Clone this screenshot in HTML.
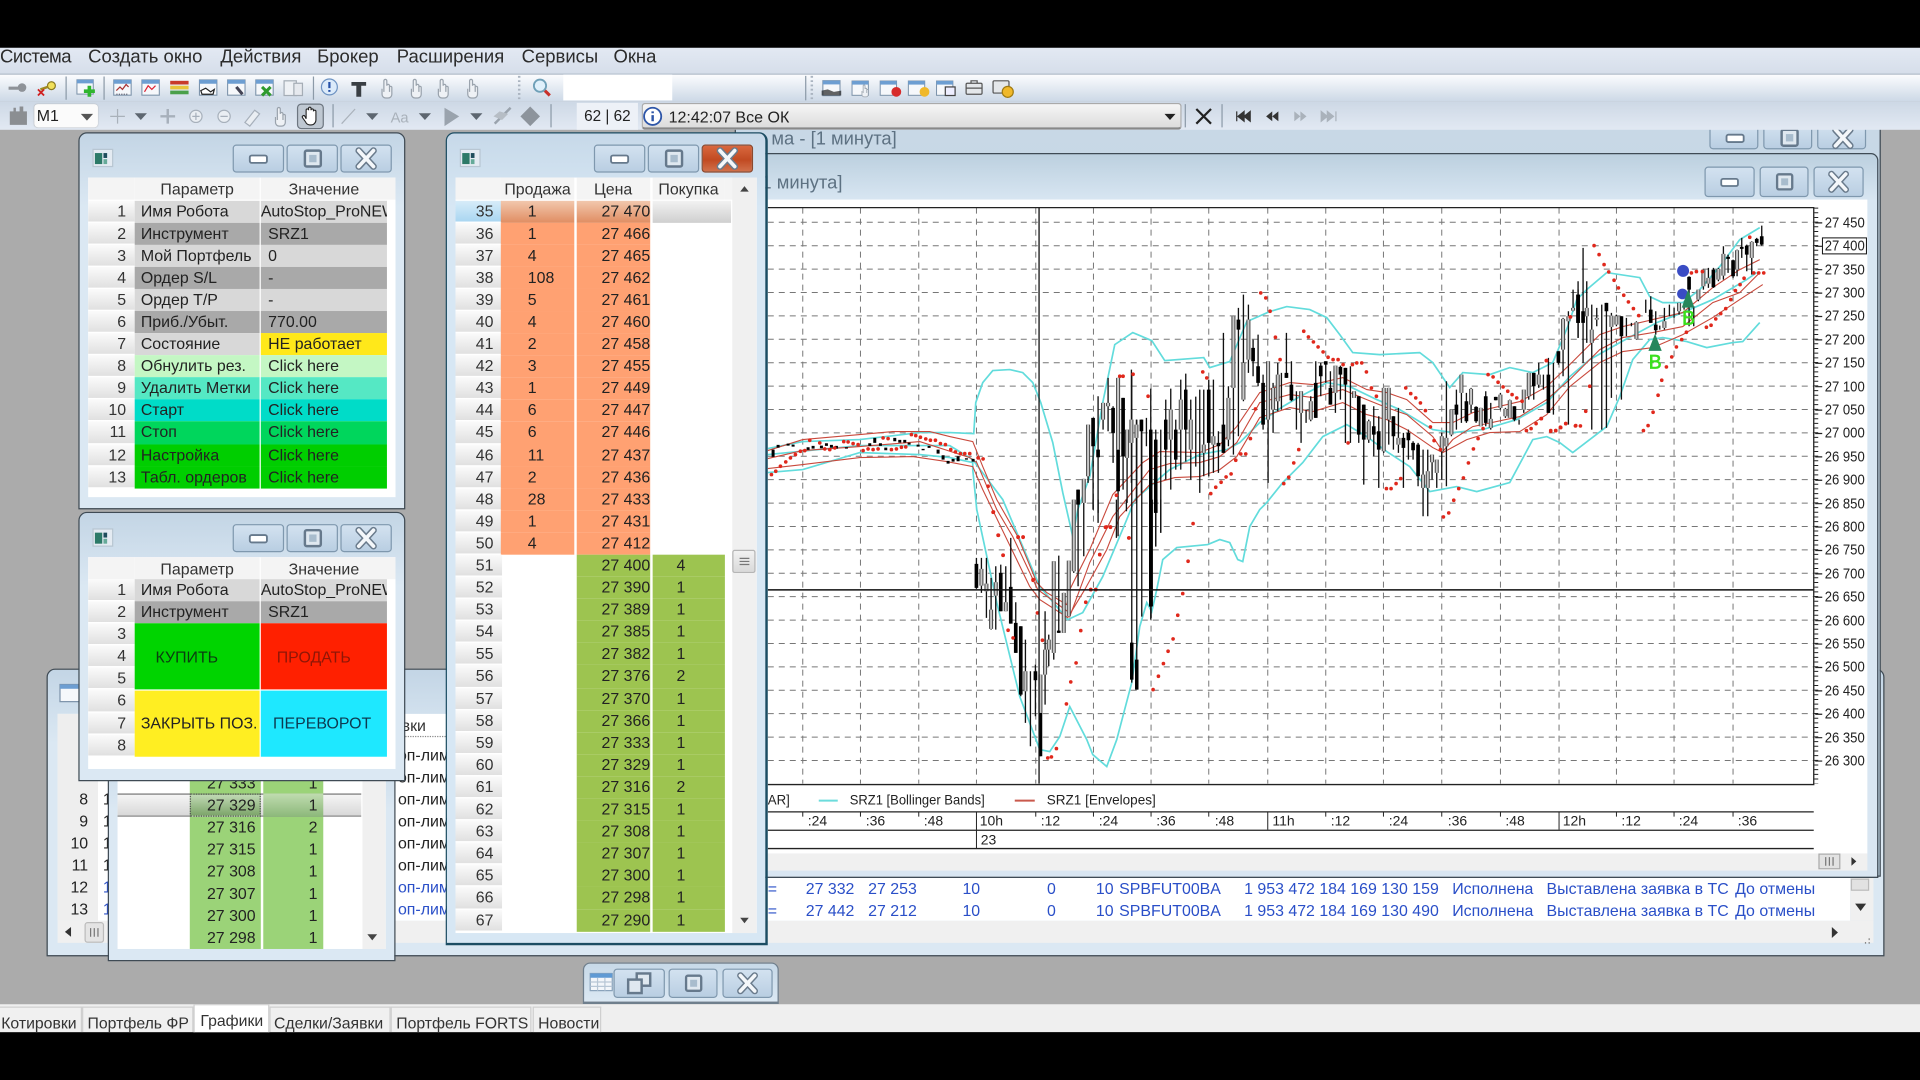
<!DOCTYPE html>
<html lang="ru"><head><meta charset="utf-8"><title>Терминал</title>
<style>
html,body{margin:0;padding:0;background:#000;width:1920px;height:1080px;overflow:hidden}
#p{position:absolute;left:0;top:0;width:1568px;height:882px;transform:scale(1.22449);transform-origin:0 0;overflow:hidden;background:#000;font:13px/18px "Liberation Sans","Noto Sans CJK SC",sans-serif;color:#222}
#p div,#p span{box-sizing:border-box}
.a{position:absolute}
.t{position:absolute;white-space:nowrap;line-height:18px}
.win{position:absolute;border:1px solid #3f4b55;border-radius:7px 7px 0 0;background:linear-gradient(#c3d5e5,#dbe8f3 60px,#dbe8f3)}
.b{position:absolute;width:42px;height:23px;border:1px solid #7f98ae;border-radius:3px;background:linear-gradient(#d3e2f0,#b9cee2)}
.b svg{position:absolute;left:0;top:0;width:40px;height:21px}
.bx{border:1px solid #8a4a30;background:linear-gradient(#d9683f,#c14a22 55%,#d1714c)}
.tb{position:absolute;background:#fff;overflow:hidden}
.r{position:relative;height:18.1px}
.r>*{position:absolute;top:0;height:18.1px;line-height:18.7px;overflow:hidden;white-space:nowrap}
.n{left:0;width:38px;text-align:right;padding-right:7px;background:linear-gradient(#fbfbfb,#e0e0e0);color:#333;border-bottom:1px solid #fff}
.c1{left:38px;width:102px;padding-left:5px}
.c2{left:141px;width:103px;padding-left:6px}
.hd{position:absolute;top:0;height:18px;text-align:center;line-height:19px;color:#333;background:#f4f4f4}
.L{background:#d8d8d8}.D{background:#a9a9a9}
.s{left:37px;width:60px;padding-left:22px}
.pr{left:98.5px;width:60.5px;text-align:right}
.v{left:160.5px;width:59.5px;padding-left:20px}
.o{background:#ffa172}.g{background:#9dc450}
.tab{position:absolute;top:821.5px;height:21px;background:#f0f0f0;border:1px solid #cfcfcf;border-bottom:0;line-height:25px;padding-left:4px;color:#333;font-size:12.9px;white-space:nowrap;overflow:hidden}
.u{position:absolute;top:0;color:#2a4fc8;white-space:nowrap}
.m{position:absolute;top:37.5px;font-size:15.1px;line-height:18px;color:#2b2b2b;white-space:nowrap}
.cy{fill:none;stroke:#62dcdc;stroke-width:1.7}
.rd{fill:none;stroke:#c9493c;stroke-width:1.1}
.wk{fill:none;stroke:#111;stroke-width:4}
.bk{fill:none;stroke:#000;stroke-width:11}
.hb{fill:none;stroke:#444;stroke-width:12}
.hi{fill:none;stroke:#c9c9c9;stroke-width:6}
.dt{fill:none;stroke:#e0281c;stroke-width:11;stroke-linecap:round}
</style></head><body><div id="p">

<svg width="0" height="0" style="position:absolute"><defs>
<symbol id="mn" viewBox="0 0 40 21"><rect x="13" y="8" width="14" height="6" rx="1.5" fill="#fff" stroke="#66798c" stroke-width="1.5"/></symbol>
<symbol id="mx" viewBox="0 0 40 21"><rect x="14" y="4" width="13" height="13" rx="1.5" fill="#dfe8f0" stroke="#66798c" stroke-width="2"/><rect x="17.5" y="7.5" width="6" height="6" fill="#a8bccd"/></symbol>
<symbol id="cl" viewBox="0 0 40 21"><path d="M14 4L26 17M26 4L14 17" stroke="#6a7b8c" stroke-width="5.5" stroke-linecap="round"/><path d="M14 4L26 17M26 4L14 17" stroke="#f4f7fa" stroke-width="3" stroke-linecap="round"/></symbol>
<symbol id="wi" viewBox="0 0 18 16"><rect x="1" y="1" width="16" height="14" fill="#e4ebf2" stroke="#b8c6d2"/><rect x="2.5" y="4" width="6" height="9" fill="#2c7a68"/><rect x="9.5" y="4" width="3" height="4" fill="#1f4d5c"/><rect x="9.5" y="9" width="3" height="4" fill="#6a9"/></symbol>
<symbol id="d" viewBox="0 0 18 16"><rect x="1" y="1" width="16" height="14" fill="#f6f8fb" stroke="#7d93aa"/><rect x="1" y="1" width="16" height="3.5" fill="#6d9ed2"/></symbol>
</defs></svg>

<!-- MDI background -->
<div class="a" style="left:0;top:59px;width:1568px;height:761px;background:#ababab"></div>

<!-- Orders window (behind) -->
<div class="win" style="left:38px;top:546px;width:1501px;height:235px"></div>
<svg class="a" style="left:48px;top:558px;width:18px;height:16px"><use href="#d"/></svg>
<circle></circle>
<div class="a" style="left:47px;top:583px;width:1464px;height:169px;background:#fff"></div>
<div class="a" style="left:47px;top:583px;width:33px;height:169px;background:#eee"></div>
<div class="a" style="left:47px;top:752px;width:1483px;height:18px;background:#f0f0f0"></div>
<div class="a" style="left:1511px;top:716px;width:19px;height:36px;background:#f0f0f0"></div>
<div class="t" style="left:328px;top:584px;color:#333">вки</div>
<div class="a" style="left:327px;top:601px;width:37px;border-top:1px dotted #888"></div>
<div class="t" style="left:325px;top:608px">оп-лим</div>
<div class="t" style="left:325px;top:626px">оп-лим</div>
<div class="t" style="left:325px;top:644px">оп-лим</div>
<div class="t" style="left:325px;top:662px">оп-лим</div>
<div class="t" style="left:325px;top:680px">оп-лим</div>
<div class="t" style="left:325px;top:698px">оп-лим</div>
<div class="t" style="left:325px;top:716px;color:#2a4fc8">оп-лим</div>
<div class="t" style="left:325px;top:734px;color:#2a4fc8">оп-лим</div>
<div class="t" style="left:47px;top:644px;width:25px;text-align:right">8</div><div class="t" style="left:84px;top:644px">1</div>
<div class="t" style="left:47px;top:662px;width:25px;text-align:right">9</div><div class="t" style="left:84px;top:662px">1</div>
<div class="t" style="left:47px;top:680px;width:25px;text-align:right">10</div><div class="t" style="left:84px;top:680px">1</div>
<div class="t" style="left:47px;top:698px;width:25px;text-align:right">11</div><div class="t" style="left:84px;top:698px">1</div>
<div class="t" style="left:47px;top:716px;width:25px;text-align:right">12</div><div class="t" style="left:84px;top:716px;color:#2a4fc8">1</div>
<div class="t" style="left:47px;top:734px;width:25px;text-align:right">13</div><div class="t" style="left:84px;top:734px;color:#2a4fc8">1</div>
<svg class="a" style="left:50px;top:753px;width:38px;height:17px"><path d="M8 4v8L3 8z" fill="#333"/><rect x="19.5" y="0.5" width="15" height="16" rx="2" fill="#e4e4e4" stroke="#bbb"/><path d="M24 5v7M27 5v7M30 5v7" stroke="#777"/></svg>

<!-- order rows -->
<div class="a" style="left:627px;top:716px;width:884px;height:36px;overflow:hidden">
 <div class="a" style="left:0;top:1px;width:884px;height:18px">
 <span class="u" style="left:0;top:0">=</span><span class="u" style="left:31px">27 332</span><span class="u" style="left:82px">27 253</span><span class="u" style="left:159px">10</span><span class="u" style="left:228px">0</span><span class="u" style="left:268px">10</span><span class="u" style="left:287px">SPBFUT00BA</span><span class="u" style="left:389px">1 953 472 184 169 130 159</span><span class="u" style="left:559px">Исполнена</span><span class="u" style="left:636px">Выставлена заявка в ТС</span><span class="u" style="left:790px">До отмены</span>
 </div>
 <div class="a" style="left:0;top:19px;width:884px;height:18px">
 <span class="u" style="left:0;top:0">=</span><span class="u" style="left:31px">27 442</span><span class="u" style="left:82px">27 212</span><span class="u" style="left:159px">10</span><span class="u" style="left:228px">0</span><span class="u" style="left:268px">10</span><span class="u" style="left:287px">SPBFUT00BA</span><span class="u" style="left:389px">1 953 472 184 169 130 490</span><span class="u" style="left:559px">Исполнена</span><span class="u" style="left:636px">Выставлена заявка в ТС</span><span class="u" style="left:790px">До отмены</span>
 </div>
</div>
<svg class="a" style="left:1490px;top:716px;width:48px;height:60px"><rect x="22" y="2" width="14" height="9" fill="#e2e2e2" stroke="#bbb"/><path d="M25 22h9l-4.500 6z" fill="#333"/><path d="M6 41v9l5-4.500z" fill="#333"/><path d="M36 54h1M33 54h1M36 51h1" stroke="#888" stroke-width="1.500"/></svg>

<!-- Back chart window -->
<div class="a" style="left:600px;top:96px;width:936px;height:620px;background:linear-gradient(#c8d8e6,#b7ccdc);border:1px solid #3f4b55;border-radius:6px 6px 0 0"></div>
<div class="t" style="left:630px;top:105px;font-size:15px;color:#5d7182">ма - [1 минута]</div>
<div class="b" style="left:1396px;top:101px;width:40px;height:21px"><svg><use href="#mn"/></svg></div>
<div class="b" style="left:1440px;top:101px;width:40px;height:21px"><svg><use href="#mx"/></svg></div>
<div class="b" style="left:1484px;top:101px;width:40px;height:21px"><svg><use href="#cl"/></svg></div>

<!-- Front chart window -->
<div class="a" style="left:600px;top:125px;width:934px;height:592px;background:linear-gradient(#bcd0df,#d8e6f2 38px,#d9e6f2);border:1px solid #3f4b55;border-radius:6px 6px 0 0"></div>
<div class="t" style="left:600px;top:141px;width:88px;text-align:right;font-size:15px;color:#5d7182">[1 минута]</div>
<div class="b" style="left:1392px;top:136px;width:41px;height:25px"><svg style="width:39px;height:23px"><use href="#mn"/></svg></div>
<div class="b" style="left:1437px;top:136px;width:40px;height:25px"><svg style="width:38px;height:23px"><use href="#mx"/></svg></div>
<div class="b" style="left:1481px;top:136px;width:41px;height:25px"><svg style="width:39px;height:23px"><use href="#cl"/></svg></div>
<div class="a" style="left:627px;top:163px;width:898px;height:534px;background:#fff"></div>
<div class="a" style="left:627px;top:697px;width:898px;height:13.500px;background:#f0f0f0"></div>
<svg class="a" style="left:1484px;top:697px;width:40px;height:13px"><rect x="1.500" y="0.500" width="17" height="12" fill="#e2e2e2" stroke="#aaa"/><path d="M7 3v7M10 3v7M13 3v7" stroke="#777"/><path d="M28 3v7l4-3.500z" fill="#333"/></svg>

<!-- Chart -->
<svg class="a" style="left:627.2px;top:163.33px;width:904.05px;height:547.17px" viewBox="768 200 1107 670" font-family="Liberation Sans, sans-serif">
<defs>
<path id="h8" d="M65 208V258M80 252V275M94 330V388M108 248V288M138 308V335M197 515V575M242 525V640M256 450V525M267 420V450M282 185V460M312 280V400M327 183V350M342 0V215"/>
<path id="h9" d="M12 495V520M41 470V495M86 355V480M101 110V325M131 250V360M146 120V240M205 245V420M220 325V390M234 285V365M304 335V400M333 365V420M407 258V340M463 335V355M507 425V480M552 325V515M567 325V420M596 475V495M670 585V625M684 575V625M697 525V548M711 540V580M726 470V515M740 475V500M755 390V465M785 285V340M814 328V375M843 385V440M873 418V445M902 345V385M917 388V410M930 362V415M972 330V390M987 280V350M1017 285V315M1090 118V210M1106 110V125M1120 85V93"/>
<path id="h0" d="M141 295V320M156 360V400M171 325V330M215 318V352M230 320V345M290 338V388M374 335V355M418 280V305M476 240V270M491 180V230M506 205V222M536 178V210M551 133V198M592 122V180M636 97V145"/>
<path id="hz" d="M942 328V400M955 165V320M1000 100V150M1015 100V110M1045 25V240M1072 180V265M1085 150V220M1100 165V205"/>
<path id="hr" d="M1171 410V440M1181 400V430M1191 420V450"/>
</defs>
<!-- grid -->
<path d="M768 222.700H1814M768 246.100H1814M768 269.500H1814M768 292.900H1814M768 316.300H1814M768 339.700H1814M768 363.100H1814M768 386.500H1814M768 409.900H1814M768 433.300H1814M768 456.700H1814M768 480.100H1814M768 503.500H1814M768 526.900H1814M768 550.300H1814M768 573.700H1814M768 597.100H1814M768 620.500H1814M768 643.900H1814M768 667.300H1814M768 690.700H1814M768 714.100H1814M768 737.500H1814M768 760.900H1814" fill="none" stroke="#777" stroke-width="1" stroke-dasharray="6 5"/>
<path d="M803 208V784M860.700 208V784M919 208V784M976.700 208V784M1036 208V784M1093.700 208V784M1151.300 208V784M1209 208V784M1268 208V784M1326 208V784M1383.700 208V784M1442 208V784M1500.700 208V784M1559.300 208V784M1616.700 208V784M1674.300 208V784M1733.300 208V784" fill="none" stroke="#777" stroke-width="1" stroke-dasharray="6 5"/>
<!-- bollinger -->
<polyline class="cy" points="768,449 803,442 860,440 920,433 950,433 974,434 976,403 983,383 993,371 1010,370 1023,373 1033,383 1041,403 1053,443 1063,493 1073,537 1078,510 1090,477 1103,403 1115,345 1133,333 1152,341 1165,361 1204,358 1210,368 1230,362 1247,322 1270,312 1287,307 1310,310 1327,318 1340,335 1353,353 1380,355 1420,353 1433,363 1450,388 1463,373 1490,375 1510,368 1533,373 1553,363 1568,327 1577,300 1587,290 1607,273 1640,278 1650,297 1663,303 1683,303 1700,290 1720,267 1740,240 1760,228"/>
<polyline class="cy" points="768,473 803,470 860,453 920,455 950,458 973,463 973,470 977,510 997,603 1020,697 1040,750 1050,752 1060,737 1070,707 1087,740 1093,755 1107,767 1117,740 1132,683 1140,627 1147,603 1152,612 1157,590 1163,560 1177,548 1208,545 1220,540 1230,543 1238,560 1243,562 1250,527 1260,510 1267,503 1283,483 1303,463 1323,437 1347,425 1367,437 1387,452 1410,467 1430,492 1457,487 1477,492 1510,483 1533,440 1547,437 1560,443 1573,453 1607,427 1620,397 1633,360 1650,340 1663,338 1687,342 1707,348 1733,343 1743,342 1760,323"/>
<polyline class="cy" points="768,455 860,446 950,446 973,460 1003,500 1040,587 1068,620 1083,613 1103,577 1127,520 1135,500 1170,470 1200,455 1227,450 1240,443 1260,423 1283,407 1300,397 1327,383 1350,387 1377,400 1400,410 1433,430 1453,433 1483,430 1517,420 1547,403 1570,377 1590,360 1620,343 1657,323 1683,313 1713,300 1747,280 1757,273"/>
<!-- envelopes -->
<polyline class="rd" points="768,451 803,440 860,435 893,432 930,432 950,437 973,442 983,467 997,500 1018,537 1037,583 1047,593 1067,605 1070,590 1090,550 1113,495 1143,463 1160,452 1200,453 1220,445 1237,427 1260,393 1290,383 1313,385 1343,378 1367,390 1387,393 1407,400 1433,423 1453,423 1473,413 1520,402 1547,387 1570,365 1600,335 1623,327 1653,320 1683,313 1713,288 1740,270 1760,260"/>
<polyline class="rd" points="768,459 803,451 860,447 920,442 970,458 977,463 997,510 1013,537 1038,590 1068,612 1070,617 1090,563 1113,517 1150,470 1170,464 1200,463 1220,457 1237,443 1260,403 1290,395 1313,398 1343,390 1367,400 1387,408 1407,415 1433,437 1443,452 1453,440 1473,427 1520,417 1547,400 1570,380 1600,350 1623,338 1653,333 1683,327 1713,303 1740,293 1760,273"/>
<polyline class="rd" points="768,469 803,465 860,458 913,457 947,462 973,467 983,490 1030,587 1040,600 1068,618 1085,590 1107,550 1120,517 1150,485 1175,478 1200,477 1220,470 1237,457 1260,418 1290,408 1313,412 1343,403 1367,415 1387,420 1407,430 1433,448 1443,453 1467,440 1490,433 1520,432 1547,415 1570,387 1600,363 1623,352 1653,348 1683,335 1713,318 1740,300 1763,285"/>
<!-- candles real -->
<path d="M1132 374V683M1137 420V690M1142 420V617M1151 389V620M1156 430V547M1161 430V533M1166 400V480M1171 389V490M1176 420V470M1181 380V470M1186 374V462M1191 400V480M1196 397V467" fill="none" stroke="#111" stroke-width="1.330"/>
<path d="M1132 643V680M1137 660V690M1151 430V607M1156 440V513M1166 420V450M1176 430V460M1186 390V430" fill="none" stroke="#000" stroke-width="3.500"/>
<use href="#hr" fill="none" stroke="#444" stroke-width="4"/><use href="#hr" fill="none" stroke="#ccc" stroke-width="2"/>
<!-- zoom 7 group -->
<g transform="translate(770 370) scale(.33333)">
<path class="wk" d="M925 360V650M942 328V560M955 165V340M970 145V420M985 80V430M1000 100V180M1015 25V185M1030 110V280M1045 25V500M1060 85V360M1072 180V400M1085 0V340M1100 150V400M1115 150V370M1130 145V230"/>
<path class="bk" style="stroke-width:9" d="M10 240V262M25 226V234M55 222V228M70 225V231M115 233V241M130 229V237M155 228V236M170 221V229M185 226V234M200 229V237M230 233V237M265 223V229M300 221V229M315 205V220M332 221V229M348 234V242M375 205V215M390 211V219M405 211V219M418 219V225M445 225V231M460 238V242M478 229V235M505 240V252M520 257V270M535 274V282M550 268V276M565 260V275M590 266V270M610 268V276"/>
<path class="bk" d="M925 360V405M970 145V230M985 240V263M1030 115V190M1045 240V365M1060 85V260M1115 150V185"/>
<use href="#hz" class="hb"/><use href="#hz" class="hi"/>
<path class="dt" d="M5 315h0M18 305h0M32 290h0M48 277h0M62 265h0M77 255h0M92 245h0M105 243h0M120 212h0M150 220h0M165 238h0M180 240h0M195 235h0M222 216h0M235 217h0M250 222h0M265 225h0M280 243h0M295 238h0M310 240h0M325 238h0M340 205h0M355 207h0M365 240h0M380 238h0M395 233h0M408 232h0M425 195h0M438 198h0M452 203h0M468 208h0M482 212h0M497 212h0M512 222h0M527 225h0M543 240h0M557 247h0M572 252h0M585 252h0M600 252h0M625 265h0M640 268h0M655 350h0M670 428h0M685 497h0M700 557h0M745 503h0M760 503h0M790 632h0M1010 472h0M1022 472h0M990 555h0M1040 377h0M1077 505h0M1060 20h0M1050 20h0M1090 14h0M1135 80h0M963 660h0M978 660h0"/>
</g>
<!-- zoom 8 group -->
<g transform="translate(960 500) scale(.33333)">
<path class="wk" d="M50 175V268M65 175V280M80 175V355M94 235V390M108 200V390M123 195V335M138 200V335M153 115V372M168 308V460M183 380V590M197 420V670M212 515V740M227 495V650M242 525V770M256 335V615M267 405V500M282 185V480M297 168V400M312 280V400M327 183V350M342 0V220M400 0V30M415 0V70M470 0V115M500 0V35M574 0V355M588 0V140M603 0V100"/>
<path class="bk" d="M50 193V265M123 220V335M153 262V372M168 370V460M183 380V585M227 515V542M242 640V770M297 393V400M574 0V320M588 0V40"/>
<use href="#h8" class="hb"/><use href="#h8" class="hi"/>
<path class="dt" d="M101 37h0M116 107h0M130 167h0M145 392h0M160 415h0M175 112h0M190 112h0M220 240h0M233 340h0M248 422h0M264 775h0M275 772h0M290 747h0M320 613h0M333 547h0M349 490h0M363 393h0M378 308h0M393 270h0M408 270h0M420 165h0M437 83h0M452 83h0M508 115h0M580 570h0M596 530h0M611 492h0M625 455h0M640 418h0M654 347h0M669 282h0M685 185h0M700 72h0"/>
</g>
<!-- zoom 9 group -->
<g transform="translate(1200 280) scale(.33333)">
<path class="wk" d="M0 330V640M12 330V590M27 300V590M41 300V580M56 455V580M71 160V520M86 320V500M101 110V525M116 85V470M131 45V365M146 75V280M160 180V290M175 165V320M190 285V450M205 245V610M220 310V460M234 250V395M245 280V390M260 160V295M275 245V365M290 335V450M304 335V490M319 390V430M333 350V425M348 245V415M363 250V350M378 245V310M392 275V375M407 258V400M422 258V360M437 265V490M452 260V490M463 335V355M477 350V490M492 375V615M507 420V490M522 380V530M537 410V625M552 325V520M567 325V495M581 410V510M596 385V520M611 460V625M626 450V540M640 485V540M655 490V620M670 510V710M684 510V710M697 525V600M711 540V625M726 460V600M740 305V620M755 390V470M770 330V450M785 285V430M800 340V430M814 325V400M829 380V430M843 385V440M858 335V440M873 370V450M888 352V362M902 340V390M917 385V415M930 360V415M944 380V425M958 420V435M972 330V400M987 280V360M1002 280V360M1017 250V325M1031 285V330M1046 235V400M1061 250V405M1076 215V255M1090 115V290M1106 95V435M1120 30V95M1135 30V175"/>
<path class="bk" d="M27 330V490M56 490V500M71 435V520M116 120V150M160 205V245M175 260V310M190 310V435M260 280V295M275 315V362M348 310V415M363 258V290M378 245V255M392 325V375M422 262V285M437 265V315M477 350V465M492 375V480M522 440V465M537 455V510M581 410V470M611 475V505M626 460V482M640 490V512M655 495V590M770 375V405M800 365V425M829 382V425M858 350V430M888 352V362M944 380V420M1002 280V320M1046 285V400M1076 215V250M1135 45V130"/>
<use href="#h9" class="hb"/><use href="#h9" class="hi"/>
<path class="dt" d="M33 642h0M48 623h0M64 608h0M79 592h0M94 583h0M108 542h0M123 523h0M138 523h0M152 477h0M167 388h0M9 277h0M21 295h0M183 40h0M198 55h0M211 95h0M227 173h0M241 240h0M252 612h0M267 593h0M282 550h0M297 510h0M312 155h0M326 172h0M341 187h0M355 202h0M370 217h0M385 233h0M400 240h0M415 240h0M430 255h0M445 490h0M458 255h0M471 250h0M486 250h0M500 277h0M515 325h0M530 350h0M560 627h0M574 627h0M589 612h0M603 597h0M618 325h0M633 342h0M648 355h0M662 370h0M677 393h0M692 442h0M703 483h0M722 510h0M731 712h0M747 700h0M762 662h0M777 627h0M791 595h0M806 550h0M821 508h0M835 477h0M850 447h0M865 285h0M880 292h0M895 308h0M910 322h0M924 335h0M937 345h0M951 355h0M967 365h0M980 453h0M994 447h0M1009 432h0M1024 417h0M1040 243h0M1053 455h0M1068 453h0M1083 444h0M1098 432h0M1112 112h0M1128 438h0"/>
</g>
<!-- zoom 10 group -->
<g transform="translate(1540 210) scale(.33333)">
<circle cx="430" cy="184" r="18" fill="#3a4cc4"/><circle cx="428" cy="253" r="16" fill="#3a4cc4"/>
<path class="wk" d="M115 215V385M130 115V460M141 215V400M156 285V660M171 295V350M186 285V660M200 280V655M215 310V565M230 315V350M245 320V570M260 325V380M275 340V350M290 335V390M318 270V310M333 260V340M348 305V375M360 348V360M374 295V360M389 285V320M403 295V325M418 280V315M433 280V300M448 200V350M462 290V350M476 240V275M491 178V240M506 175V235M521 175V235M536 175V215M551 110V210M565 135V190M580 150V205M592 120V200M606 85V145M621 105V185M636 95V195M651 85V110M666 48V108"/>
<path class="bk" d="M115 255V340M130 305V340M200 280V305M245 320V380M333 300V340M348 345V362M448 202V240M521 180V233M565 142V148M580 152V200M606 112V118M621 108V135M651 88V100M666 80V105"/>
<use href="#h0" class="hb"/><use href="#h0" class="hi"/>
<path class="dt" d="M163 108h0M178 135h0M193 165h0M207 187h0M223 212h0M236 235h0M252 257h0M266 277h0M281 297h0M297 318h0M311 663h0M325 648h0M340 608h0M355 557h0M366 512h0M380 472h0M396 442h0M410 412h0M426 390h0M440 368h0M455 190h0M470 186h0M488 186h0M500 353h0M514 347h0M528 328h0M543 312h0M558 297h0M573 270h0M587 243h0M601 225h0M613 206h0M630 83h0M642 190h0M657 190h0M672 190h0M5 627h0M20 453h0M33 663h0M48 663h0M62 653h0M78 642h0M92 322h0M107 649h0M122 649h0M138 605h0M150 530h0"/>
<path d="M346 372L326 424H366Z" fill="#27875c"/><path d="M445 240L426 294H464Z" fill="#27875c"/>
<text x="327" y="477" font-size="58" fill="#3ae01e" stroke="#3ae01e" stroke-width="2" font-family="Liberation Sans, sans-serif">B</text>
<text x="427" y="345" font-size="58" fill="#3ae01e" stroke="#3ae01e" stroke-width="2" font-family="Liberation Sans, sans-serif">B</text>
</g>
<!-- crosshair + frame -->
<path d="M1039.300 208V784" stroke="#111" stroke-width="1.300"/>
<path d="M768 590.300H1814" stroke="#111" stroke-width="1.600"/>
<path d="M768 208H1814V785H768" fill="none" stroke="#222" stroke-width="1.300"/>
<!-- axis ticks -->
<path d="M1816.500 208V784" stroke="#222" stroke-width="4" stroke-dasharray="1 3.680"/>
<path d="M1819 222.700V784" stroke="#222" stroke-width="7" stroke-dasharray="1.200 22.200"/>
<rect x="1822.700" y="238.300" width="44" height="16" fill="#fff" stroke="#111"/>
<g font-size="15" fill="#222">
<text x="1825" y="228" textLength="40" lengthAdjust="spacingAndGlyphs">27 450</text><text x="1825" y="251" textLength="40" lengthAdjust="spacingAndGlyphs">27 400</text><text x="1825" y="275" textLength="40" lengthAdjust="spacingAndGlyphs">27 350</text><text x="1825" y="298" textLength="40" lengthAdjust="spacingAndGlyphs">27 300</text><text x="1825" y="321" textLength="40" lengthAdjust="spacingAndGlyphs">27 250</text><text x="1825" y="345" textLength="40" lengthAdjust="spacingAndGlyphs">27 200</text><text x="1825" y="368" textLength="40" lengthAdjust="spacingAndGlyphs">27 150</text><text x="1825" y="392" textLength="40" lengthAdjust="spacingAndGlyphs">27 100</text><text x="1825" y="415" textLength="40" lengthAdjust="spacingAndGlyphs">27 050</text><text x="1825" y="438" textLength="40" lengthAdjust="spacingAndGlyphs">27 000</text><text x="1825" y="462" textLength="40" lengthAdjust="spacingAndGlyphs">26 950</text><text x="1825" y="485" textLength="40" lengthAdjust="spacingAndGlyphs">26 900</text><text x="1825" y="509" textLength="40" lengthAdjust="spacingAndGlyphs">26 850</text><text x="1825" y="532" textLength="40" lengthAdjust="spacingAndGlyphs">26 800</text><text x="1825" y="555" textLength="40" lengthAdjust="spacingAndGlyphs">26 750</text><text x="1825" y="579" textLength="40" lengthAdjust="spacingAndGlyphs">26 700</text><text x="1825" y="602" textLength="40" lengthAdjust="spacingAndGlyphs">26 650</text><text x="1825" y="626" textLength="40" lengthAdjust="spacingAndGlyphs">26 600</text><text x="1825" y="649" textLength="40" lengthAdjust="spacingAndGlyphs">26 550</text><text x="1825" y="672" textLength="40" lengthAdjust="spacingAndGlyphs">26 500</text><text x="1825" y="696" textLength="40" lengthAdjust="spacingAndGlyphs">26 450</text><text x="1825" y="719" textLength="40" lengthAdjust="spacingAndGlyphs">26 400</text><text x="1825" y="743" textLength="40" lengthAdjust="spacingAndGlyphs">26 350</text><text x="1825" y="766" textLength="40" lengthAdjust="spacingAndGlyphs">26 300</text>
</g>
<!-- legend -->
<g font-size="14" fill="#222">
<text x="768" y="805" textLength="22" lengthAdjust="spacingAndGlyphs">AR]</text>
<text x="850" y="805" textLength="135" lengthAdjust="spacingAndGlyphs">SRZ1 [Bollinger Bands]</text>
<text x="1047" y="805" textLength="109" lengthAdjust="spacingAndGlyphs">SRZ1 [Envelopes]</text>
</g>
<path d="M819 801H838" stroke="#6cdcdc" stroke-width="2"/><path d="M1015 801H1035" stroke="#c9594c" stroke-width="2"/>
<!-- time axis -->
<path d="M768 812.300H1814M768 830.700H1814M768 849H1814" stroke="#222" stroke-width="1.300"/>
<path d="M803 812V817M860.700 812V817M919 812V817M1036 812V817M1093.700 812V817M1151.300 812V817M1209 812V817M1326 812V817M1383.700 812V817M1442 812V817M1500.700 812V817M1616.700 812V817M1674.300 812V817M1733.300 812V817M976.700 812V849M1268 812V830M1559.300 812V830" stroke="#222" stroke-width="1"/>
<g font-size="14" fill="#222">
<text x="808" y="826">:24</text><text x="866" y="826">:36</text><text x="924" y="826">:48</text><text x="980" y="826">10h</text><text x="1041" y="826">:12</text><text x="1099" y="826">:24</text><text x="1156.500" y="826">:36</text><text x="1215" y="826">:48</text><text x="1272.600" y="826">11h</text><text x="1331" y="826">:12</text><text x="1389" y="826">:24</text><text x="1448" y="826">:36</text><text x="1505.600" y="826">:48</text><text x="1563" y="826">12h</text><text x="1621.700" y="826">:12</text><text x="1679" y="826">:24</text><text x="1738" y="826">:36</text>
<text x="981" y="845">23</text>
</g>
</svg>

<!-- Glass window behind -->
<div class="win" style="left:88px;top:600px;width:235px;height:184.500px;border-radius:0"></div>
<div class="a" style="left:96px;top:620px;width:219px;height:155px;background:#fff"></div>
<div class="a" style="left:296px;top:620px;width:19px;height:155px;background:#f0f0f0"></div>
<div class="a" style="left:155px;top:630px;width:58px;height:145px;background:#9bd378"></div>
<div class="a" style="left:215px;top:630px;width:49px;height:145px;background:#9bd378"></div>
<div class="a" style="left:96px;top:648px;width:199px;height:18.500px;background:linear-gradient(#f5f5f5,#d8d8d8);border-top:1px solid #777;border-bottom:1px solid #888"></div>
<div class="a" style="left:155px;top:648px;width:58px;height:18.500px;background:linear-gradient(#c0d9b4,#7da56a);border:1px dotted #555"></div>
<div class="a" style="left:215px;top:648px;width:49px;height:18.500px;background:linear-gradient(#c0dcb0,#8cb87a)"></div>
<div class="t" style="left:169px;top:631px">27 333</div><div class="t" style="left:252px;top:631px">1</div>
<div class="t" style="left:169px;top:649px">27 329</div><div class="t" style="left:252px;top:649px">1</div>
<div class="t" style="left:169px;top:667px">27 316</div><div class="t" style="left:252px;top:667px">2</div>
<div class="t" style="left:169px;top:685px">27 315</div><div class="t" style="left:252px;top:685px">1</div>
<div class="t" style="left:169px;top:703px">27 308</div><div class="t" style="left:252px;top:703px">1</div>
<div class="t" style="left:169px;top:721px">27 307</div><div class="t" style="left:252px;top:721px">1</div>
<div class="t" style="left:169px;top:739px">27 300</div><div class="t" style="left:252px;top:739px">1</div>
<div class="t" style="left:169px;top:757px">27 298</div><div class="t" style="left:252px;top:757px">1</div>
<svg class="a" style="left:298px;top:761px;width:12px;height:10px"><path d="M2 2h8L6 7z" fill="#444"/></svg>

<!-- Window 1 -->
<div class="win" style="left:64px;top:108px;width:267px;height:307.500px"></div>
<svg class="a" style="left:75px;top:121px;width:18px;height:16px"><use href="#wi"/></svg>
<div class="b" style="left:190px;top:118px"><svg><use href="#mn"/></svg></div>
<div class="b" style="left:234px;top:118px"><svg><use href="#mx"/></svg></div>
<div class="b" style="left:278px;top:118px"><svg><use href="#cl"/></svg></div>
<div class="tb" style="left:72px;top:145px;width:251px;height:261px">
<div class="hd" style="left:0;width:38px"></div><div class="hd" style="left:38px;width:102px">Параметр</div><div class="hd" style="left:141px;width:110px;padding-right:7px">Значение</div>
<div style="height:18.500px"></div>
<div class="r"><span class="n">1</span><span class="c1 L">Имя Робота</span><span class="c2 L" style="padding-left:0">AutoStop_ProNEW</span></div>
<div class="r"><span class="n">2</span><span class="c1 D">Инструмент</span><span class="c2 D">SRZ1</span></div>
<div class="r"><span class="n">3</span><span class="c1 L">Мой Портфель</span><span class="c2 L">0</span></div>
<div class="r"><span class="n">4</span><span class="c1 D">Ордер S/L</span><span class="c2 D">-</span></div>
<div class="r"><span class="n">5</span><span class="c1 L">Ордер T/P</span><span class="c2 L">-</span></div>
<div class="r"><span class="n">6</span><span class="c1 D">Приб./Убыт.</span><span class="c2 D">770.00</span></div>
<div class="r"><span class="n">7</span><span class="c1 L">Состояние</span><span class="c2" style="background:#ffe81a">НЕ работает</span></div>
<div class="r"><span class="n">8</span><span class="c1" style="background:#c4f7c4">Обнулить рез.</span><span class="c2" style="background:#c4f7c4">Click here</span></div>
<div class="r"><span class="n">9</span><span class="c1" style="background:#55e8c4">Удалить Метки</span><span class="c2" style="background:#55e8c4">Click here</span></div>
<div class="r"><span class="n">10</span><span class="c1" style="background:#00dcc8">Старт</span><span class="c2" style="background:#00dcc8">Click here</span></div>
<div class="r"><span class="n">11</span><span class="c1" style="background:#00d65c">Стоп</span><span class="c2" style="background:#00d65c">Click here</span></div>
<div class="r"><span class="n">12</span><span class="c1" style="background:#00ce00">Настройка</span><span class="c2" style="background:#00ce00">Click here</span></div>
<div class="r"><span class="n">13</span><span class="c1" style="background:#00ce00">Табл. ордеров</span><span class="c2" style="background:#00ce00">Click here</span></div>
</div>

<!-- Window 2 -->
<div class="win" style="left:64px;top:418px;width:267px;height:219.500px"></div>
<svg class="a" style="left:75px;top:431px;width:18px;height:16px"><use href="#wi"/></svg>
<div class="b" style="left:190px;top:428px"><svg><use href="#mn"/></svg></div>
<div class="b" style="left:234px;top:428px"><svg><use href="#mx"/></svg></div>
<div class="b" style="left:278px;top:428px"><svg><use href="#cl"/></svg></div>
<div class="tb" style="left:72px;top:455px;width:251px;height:173px">
<div class="hd" style="left:0;width:38px"></div><div class="hd" style="left:38px;width:102px">Параметр</div><div class="hd" style="left:141px;width:110px;padding-right:7px">Значение</div>
<div style="height:18px"></div>
<div class="r"><span class="n">1</span><span class="c1 L">Имя Робота</span><span class="c2 L" style="padding-left:0">AutoStop_ProNEW</span></div>
<div class="r"><span class="n">2</span><span class="c1 D">Инструмент</span><span class="c2 D">SRZ1</span></div>
<div class="r"><span class="n">3</span></div><div class="r"><span class="n">4</span></div><div class="r"><span class="n">5</span></div><div class="r"><span class="n">6</span></div><div class="r"><span class="n">7</span></div><div class="r"><span class="n">8</span></div>
<div class="a" style="left:38px;top:54.200px;width:102px;height:54.300px;background:#00d400;line-height:55px;padding-left:17px;color:#0b3d10">КУПИТЬ</div>
<div class="a" style="left:141px;top:54.200px;width:103px;height:54.300px;background:#ff2000;line-height:55px;padding-left:13px;color:#8f1606">ПРОДАТЬ</div>
<div class="a" style="left:38px;top:108.500px;width:102px;height:54.300px;background:#ffee22;line-height:54px;padding-left:5px;color:#222;white-space:nowrap">ЗАКРЫТЬ ПОЗ.</div>
<div class="a" style="left:141px;top:108.500px;width:103px;height:54.300px;background:#1ee8ff;line-height:54px;padding-left:10px;color:#0d3a50">ПЕРЕВОРОТ</div>
</div>

<!-- Depth window -->
<div class="win" style="left:363.500px;top:108px;width:263.500px;height:663.500px;background:linear-gradient(#c7d9e9,#d7e7f4 60px,#d7e7f4);border-color:#1c4d63;border-width:1px 2px 2px 1px"></div>
<svg class="a" style="left:375px;top:121px;width:18px;height:16px"><use href="#wi"/></svg>
<div class="b" style="left:485px;top:118px"><svg><use href="#mn"/></svg></div>
<div class="b" style="left:529px;top:118px"><svg><use href="#mx"/></svg></div>
<div class="b bx" style="left:573px;top:118px"><svg><use href="#cl"/></svg></div>
<div class="tb" style="left:372px;top:145px;width:246px;height:617px">
<div class="hd" style="left:0;width:37px"></div><div class="hd" style="left:37px;width:60px">Продажа</div><div class="hd" style="left:98.500px;width:60.500px">Цена</div><div class="hd" style="left:160.500px;width:59.500px">Покупка</div><div class="hd" style="left:220px;width:26px"></div>
<div style="height:18.500px"></div>
<div class="r"><span class="n" style="background:linear-gradient(#d7ecf9,#a9d6f1)">35</span><span class="s" style="background:linear-gradient(#f2c7ad,#e08d62)">1</span><span class="pr" style="background:linear-gradient(#f2c7ad,#e08d62)">27 470</span><span class="v" style="left:160.500px;width:64px;background:linear-gradient(#f2f2f2,#cfcfcf)"></span></div>
<div class="r"><span class="n">36</span><span class="s o">1</span><span class="pr o">27 466</span></div>
<div class="r"><span class="n">37</span><span class="s o">4</span><span class="pr o">27 465</span></div>
<div class="r"><span class="n">38</span><span class="s o">108</span><span class="pr o">27 462</span></div>
<div class="r"><span class="n">39</span><span class="s o">5</span><span class="pr o">27 461</span></div>
<div class="r"><span class="n">40</span><span class="s o">4</span><span class="pr o">27 460</span></div>
<div class="r"><span class="n">41</span><span class="s o">2</span><span class="pr o">27 458</span></div>
<div class="r"><span class="n">42</span><span class="s o">3</span><span class="pr o">27 455</span></div>
<div class="r"><span class="n">43</span><span class="s o">1</span><span class="pr o">27 449</span></div>
<div class="r"><span class="n">44</span><span class="s o">6</span><span class="pr o">27 447</span></div>
<div class="r"><span class="n">45</span><span class="s o">6</span><span class="pr o">27 446</span></div>
<div class="r"><span class="n">46</span><span class="s o">11</span><span class="pr o">27 437</span></div>
<div class="r"><span class="n">47</span><span class="s o">2</span><span class="pr o">27 436</span></div>
<div class="r"><span class="n">48</span><span class="s o">28</span><span class="pr o">27 433</span></div>
<div class="r"><span class="n">49</span><span class="s o">1</span><span class="pr o">27 431</span></div>
<div class="r"><span class="n">50</span><span class="s o">4</span><span class="pr o">27 412</span></div>
<div class="r"><span class="n">51</span><span class="pr g">27 400</span><span class="v g">4</span></div>
<div class="r"><span class="n">52</span><span class="pr g">27 390</span><span class="v g">1</span></div>
<div class="r"><span class="n">53</span><span class="pr g">27 389</span><span class="v g">1</span></div>
<div class="r"><span class="n">54</span><span class="pr g">27 385</span><span class="v g">1</span></div>
<div class="r"><span class="n">55</span><span class="pr g">27 382</span><span class="v g">1</span></div>
<div class="r"><span class="n">56</span><span class="pr g">27 376</span><span class="v g">2</span></div>
<div class="r"><span class="n">57</span><span class="pr g">27 370</span><span class="v g">1</span></div>
<div class="r"><span class="n">58</span><span class="pr g">27 366</span><span class="v g">1</span></div>
<div class="r"><span class="n">59</span><span class="pr g">27 333</span><span class="v g">1</span></div>
<div class="r"><span class="n">60</span><span class="pr g">27 329</span><span class="v g">1</span></div>
<div class="r"><span class="n">61</span><span class="pr g">27 316</span><span class="v g">2</span></div>
<div class="r"><span class="n">62</span><span class="pr g">27 315</span><span class="v g">1</span></div>
<div class="r"><span class="n">63</span><span class="pr g">27 308</span><span class="v g">1</span></div>
<div class="r"><span class="n">64</span><span class="pr g">27 307</span><span class="v g">1</span></div>
<div class="r"><span class="n">65</span><span class="pr g">27 300</span><span class="v g">1</span></div>
<div class="r"><span class="n">66</span><span class="pr g">27 298</span><span class="v g">1</span></div>
<div class="r"><span class="n">67</span><span class="pr g">27 290</span><span class="v g">1</span></div>
<div class="a" style="left:226px;top:0;width:20px;height:617px;background:#f0f0f0"></div>
<div class="a" style="left:226px;top:304px;width:19px;height:19px;background:linear-gradient(#f2f2f2,#d9d9d9);border:1px solid #b5b5b5;border-radius:2px"></div>
<svg class="a" style="left:226px;top:0;width:20px;height:617px"><path d="M10 7l3.500 4.500h-7z" fill="#444"/><path d="M6.500 604.500h7l-3.500 4.500z" fill="#444"/><path d="M6 311h8M6 313.500h8M6 316h8" stroke="#777"/></svg>
</div>

<!-- bottom min window bar -->
<div class="a" style="left:476px;top:786px;width:159.500px;height:34px;border:1px solid #6f7f8d;border-bottom:2px solid #6f7f8d;border-radius:6px 6px 0 0;background:linear-gradient(#c7d9e8,#dbe8f3)"></div>
<svg class="a" style="left:481px;top:794px;width:20px;height:16px"><rect x="1" y="1" width="18" height="14" fill="#f3f6fa" stroke="#8aa3bb"/><rect x="1" y="1" width="18" height="3.500" fill="#5f9ad4"/><path d="M1 8h18M1 11.500h18M7 4.500V15M13 4.500V15" stroke="#b7c6d5"/></svg>
<div class="b" style="left:501px;top:791px;width:42px;height:24px"><svg style="width:40px;height:22px" viewBox="0 0 40 22"><rect x="18" y="3" width="11" height="10" fill="#dfe8f0" stroke="#66798c" stroke-width="2"/><rect x="11" y="8" width="11" height="11" fill="#dfe8f0" stroke="#66798c" stroke-width="2"/></svg></div>
<div class="b" style="left:546px;top:791px;width:40px;height:24px"><svg style="width:38px;height:22px"><use href="#mx"/></svg></div>
<div class="b" style="left:590px;top:791px;width:41px;height:24px"><svg style="width:39px;height:22px"><use href="#cl"/></svg></div>

<!-- tabs -->
<div class="a" style="left:0;top:819.500px;width:1568px;height:23px;background:#efefef"></div>
<div class="tab" style="left:-1px;width:67.500px;padding-left:1px">Котировки</div>
<div class="tab" style="left:66.500px;width:91.200px">Портфель ФР</div>
<div class="tab" style="left:157.700px;top:819.500px;width:62.100px;height:23px;background:#fff;z-index:2;line-height:26px;padding-left:5px">Графики</div>
<div class="tab" style="left:219.800px;width:98.800px;padding-left:3px">Сделки/Заявки</div>
<div class="tab" style="left:318.600px;width:115.900px">Портфель FORTS</div>
<div class="tab" style="left:434.500px;width:56.500px">Новости</div>
<div class="a" style="left:0;top:842.500px;width:1568px;height:40px;background:#000"></div>

<!-- top: menu and toolbars -->
<div class="a" style="left:0;top:0;width:1568px;height:38.500px;background:#000"></div>
<div class="a" style="left:0;top:38.500px;width:1568px;height:21px;background:linear-gradient(#e3e9f3,#d6deea)"></div>
<div class="m" style="left:0;letter-spacing:-.4px">Система</div><div class="m" style="left:72px">Создать окно</div><div class="m" style="left:180px">Действия</div><div class="m" style="left:259px">Брокер</div><div class="m" style="left:324px">Расширения</div><div class="m" style="left:426px">Сервисы</div><div class="m" style="left:501px">Окна</div>
<div class="a" style="left:0;top:59.500px;width:1568px;height:23.500px;background:linear-gradient(#fbfcfe,#ccd8e6);border-top:1px solid #b9c4d2"></div>
<div class="a" style="left:0;top:83px;width:1568px;height:23px;background:linear-gradient(#cdd8e5,#e2e9f3)"></div>
<div class="a" style="left:460px;top:61px;width:89px;height:21px;background:#fff"></div>
<div class="a" style="left:28px;top:85px;width:52px;height:19px;background:#fbfbfb;border-radius:3px;box-shadow:0 0 1px #aaa;padding-left:2px;line-height:20px;font-size:13px">M1</div>
<div class="a" style="left:471px;top:84px;width:50px;height:22px;background:#edf1f7;line-height:23px;text-align:center;font-size:12.500px;white-space:nowrap">62 | 62</div>
<div class="a" style="left:524px;top:84px;width:441px;height:22px;background:linear-gradient(#f6f6f6,#dcdcdc);border:1px solid #aaa;border-bottom:2px solid #888;border-radius:3px;line-height:22px;padding-left:21px;font-size:13.100px;white-space:nowrap">12:42:07 Все ОК</div>

<svg class="a" style="left:0;top:59px;width:1568px;height:48px" viewBox="0 59 1568 48">
<defs><symbol id="hand" viewBox="0 0 14 18"><path d="M4.500 12V3a1.200 1.200 0 0 1 2.400 0V7a1.100 1.100 0 0 1 2.200 0v5M9 8.500a1 1 0 0 1 2 0V14a3 3 0 0 1-3 3H6a3 3 0 0 1-3-3V9.500" fill="#eef1f5" stroke="#9aa3ad" stroke-width="1"/></symbol></defs>
<!-- toolbar 1 -->
<path d="M7 72h8" stroke="#8e9298" stroke-width="2.500"/><circle cx="18" cy="71.500" r="3.500" fill="#8e9298"/>
<circle cx="42" cy="70" r="3.200" fill="#f1e05a" stroke="#8a7a20"/><path d="M33 73l6-2" stroke="#a08a20" stroke-width="2"/><path d="M31 73l5 5M36 73l-5 5" stroke="#d02020" stroke-width="1.500"/>
<path d="M54 62.500v19M85 62.500v19M256 62.500v19M658 62v20M272 85v19M450 85v19M968 85v19M998 85v19" stroke="#8c9aa8"/>
<path d="M424 62v20M663 62v20" stroke="#aab4c0" stroke-dasharray="1.500 2" stroke-width="2"/>
<use href="#d" x="62" y="64" width="15" height="14"/><path d="M73 70v9M68.500 74.500h9" stroke="#2fb52f" stroke-width="3"/>
<use href="#d" x="92" y="64" width="16" height="15"/><path d="M95 74l3-3 2 2 3-4 2 2" stroke="#a33" fill="none"/><path d="M95 77h10" stroke="#667" stroke-dasharray="1 1"/>
<use href="#d" x="115" y="64" width="16" height="15"/><path d="M118 75l3-5 3 3 3-3" stroke="#d23" fill="none"/>
<rect x="139" y="66" width="15" height="3" fill="#c83a2a"/><rect x="139" y="70" width="15" height="3" fill="#e8c43a"/><rect x="139" y="74" width="15" height="3" fill="#4aa04a"/>
<use href="#d" x="162" y="64" width="16" height="15"/><path d="M164 74l4-2 4 3 3-2-1 4h-9z" fill="#fff" stroke="#222"/>
<use href="#d" x="185" y="64" width="16" height="15"/><path d="M193 71l5 6" stroke="#445" stroke-width="2.500"/>
<use href="#d" x="208" y="64" width="16" height="15"/><path d="M214 71l7 7M221 71l-7 7" stroke="#2e9a2e" stroke-width="2.500"/>
<rect x="232" y="66" width="10" height="12" fill="#eef1f5" stroke="#a5adb6"/><rect x="240" y="68" width="7" height="10" fill="#e6e9ee" stroke="#a5adb6"/>
<circle cx="269" cy="71" r="6.500" fill="#dcebfa" stroke="#6e93c2"/><path d="M269 67v5M269 73.500v1.500" stroke="#2752a8" stroke-width="1.800"/>
<path d="M287 67h12v3h-4v9h-4v-9h-4z" fill="#3a3f44"/>
<use href="#hand" x="309" y="63" width="14" height="18"/><use href="#hand" x="333" y="63" width="14" height="18"/><use href="#hand" x="355" y="63" width="14" height="18"/><use href="#hand" x="379" y="63" width="14" height="18"/>
<circle cx="441" cy="70" r="5" fill="#dff0fb" stroke="#6fa0b8" stroke-width="1.500"/><path d="M445 74l4 4" stroke="#c8302a" stroke-width="2.500"/>
<!-- toolbar 1 right -->
<use href="#d" x="671" y="65" width="16" height="14"/><path d="M671 74l5-1 5 2 6-1v4h-16z" fill="#222" opacity=".7"/>
<use href="#d" x="695" y="65" width="15" height="14"/><use href="#hand" x="702" y="68" width="9" height="12"/>
<use href="#d" x="718" y="65" width="15" height="14"/><circle cx="732" cy="75" r="4" fill="#d72b2b"/>
<use href="#d" x="741" y="65" width="15" height="14"/><circle cx="755" cy="75" r="4" fill="#f0b82a"/>
<use href="#d" x="764" y="65" width="15" height="14"/><rect x="772" y="71" width="8" height="7" fill="#eef" stroke="#444"/>
<rect x="789" y="68" width="13" height="9" rx="1" fill="#e4e7ea" stroke="#555"/><path d="M793 68v-2h5v2M789 72h13" stroke="#555" fill="none"/>
<rect x="811" y="66" width="13" height="10" rx="1" fill="#e4e7ea" stroke="#555"/><circle cx="823" cy="75" r="4.500" fill="#f0b82a" stroke="#a07a10"/>
<!-- toolbar 2 -->
<path d="M8 102V91h3v-3h2v3h3v-4h3v4h3v11z" fill="#8b8e92"/>
<path d="M66 93h10l-5 5.500z" fill="#555"/>
<path d="M96 89v12M90 95h12" stroke="#a9b1ba"/>
<path d="M110 92.500h10l-5 5.500zM299 92.500h10l-5 5.500zM342 92.500h10l-5 5.500zM384 92.500h10l-5 5.500z" fill="#5d6670"/>
<path d="M137 89v12M131 95h12" stroke="#a7b0bb" stroke-width="2"/>
<circle cx="160" cy="95" r="5" fill="#eaeef3" stroke="#a7b0bb"/><path d="M157 95h6M160 92v6" stroke="#a7b0bb"/>
<circle cx="183" cy="95" r="5" fill="#eaeef3" stroke="#a7b0bb"/><path d="M180 95h6" stroke="#a7b0bb"/>
<path d="M200 100l8-10 4 3-8 10z" fill="#eaeef3" stroke="#a7b0bb"/>
<use href="#hand" x="222" y="86" width="14" height="18"/>
<rect x="243" y="85" width="21" height="20" rx="3" fill="#bfc8d2" stroke="#6d7680"/>
<path d="M250 97V90a1 1 0 0 1 2 0V88.500a1 1 0 0 1 2 0V90a1 1 0 0 1 2 0v1a1 1 0 0 1 2 0v7a4 4 0 0 1-4 4h-1a4 4 0 0 1-3.500-2.500L247 96a1 1 0 0 1 2-1z" fill="#fff" stroke="#222" stroke-width=".9"/>
<path d="M279 101l11-12" stroke="#aab2bb"/>
<text x="319" y="100" font-size="12" fill="#a9b1ba" font-family="Liberation Sans, sans-serif">Aa</text>
<path d="M363 88l12 7-12 8z" fill="#9aa3ad"/>
<path d="M404 101l13-13" stroke="#9aa3ad" stroke-width="2"/><path d="M403 95l5-4 7 2-5 5z" fill="#b6bdc5"/>
<path d="M433 87l8 8-8 8-8-8z" fill="#8d949c"/>
<!-- info + nav -->
<circle cx="533" cy="95" r="7" fill="#fff" stroke="#2e56a8" stroke-width="1.500"/><path d="M533 91v1.500M533 94v5" stroke="#2e56a8" stroke-width="2"/>
<path d="M951 93h9l-4.500 5z" fill="#222"/>
<path d="M977 89l12 12M989 89l-12 12" stroke="#222" stroke-width="1.800"/>
<path d="M1010 91v8M1016 91l-5 4 5 4zM1021 91l-5 4 5 4z" fill="#333" stroke="#333"/>
<path d="M1039 91l-5 4 5 4zM1044 91l-5 4 5 4z" fill="#333"/>
<path d="M1057 91l5 4-5 4zM1062 91l5 4-5 4z" fill="#aab2bb"/>
<path d="M1079 91l5 4-5 4zM1084 91l5 4-5 4zM1091 91v8" fill="#aab2bb" stroke="#aab2bb"/>
</svg>

</div></body></html>
